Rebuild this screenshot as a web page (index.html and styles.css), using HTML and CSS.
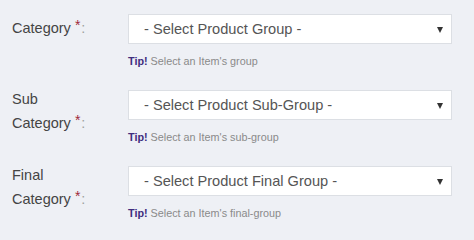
FILE: index.html
```html
<!DOCTYPE html>
<html>
<head>
<meta charset="utf-8">
<link rel="stylesheet" href="styles.css">
</head>
<body>
<div class="form">
  <div class="row">
    <div class="label one">Category <span class="req">*</span><span class="colon">:</span></div>
    <div class="field">
      <div class="select"><span>- Select Product Group -</span><span class="arrow"></span></div>
      <div class="tip"><b>Tip!</b> Select an Item's group</div>
    </div>
  </div>
  <div class="row">
    <div class="label two">Sub<br>Category <span class="req">*</span><span class="colon">:</span></div>
    <div class="field">
      <div class="select"><span>- Select Product Sub-Group -</span><span class="arrow"></span></div>
      <div class="tip"><b>Tip!</b> Select an Item's sub-group</div>
    </div>
  </div>
  <div class="row">
    <div class="label two">Final<br>Category <span class="req">*</span><span class="colon">:</span></div>
    <div class="field">
      <div class="select"><span>- Select Product Final Group -</span><span class="arrow"></span></div>
      <div class="tip"><b>Tip!</b> Select an Item's final-group</div>
    </div>
  </div>
</div>
</body>
</html>
```
FILE: styles.css
```css
html, body {
  margin: 0;
  padding: 0;
  background: #eef0f5;
  font-family: "Liberation Sans", Arial, sans-serif;
}
.form {
  padding: 14px 0 0 12px;
}
.row {
  display: flex;
  align-items: flex-start;
  margin-bottom: 22px;
}
.label {
  width: 116px;
  font-size: 14.5px;
  line-height: 24px;
  color: #444;
}
.label.one { margin-top: 2px; }
.label.two { margin-top: -3px; }
.req {
  color: #9e2a3a;
  vertical-align: 3px;
  font-size: 14px;
  line-height: 0;
}
.colon {
  color: #a0a0a0;
  margin-left: 1px;
}
.field {
  width: 324px;
}
.select {
  box-sizing: border-box;
  height: 30px;
  background: #fff;
  border: 1px solid #dcdfe4;
  display: flex;
  align-items: center;
  justify-content: space-between;
  padding: 0 8px 0 15px;
  font-size: 14.6px;
  color: #555;
}
.arrow {
  width: 0;
  height: 0;
  border-left: 3px solid transparent;
  border-right: 3px solid transparent;
  border-top: 6px solid #333;
  margin-top: 1px;
}
.tip {
  margin-top: 10px;
  font-size: 10.8px;
  line-height: 14px;
  color: #8a8a8a;
}
.tip b {
  color: #3f2d7e;
}
```
